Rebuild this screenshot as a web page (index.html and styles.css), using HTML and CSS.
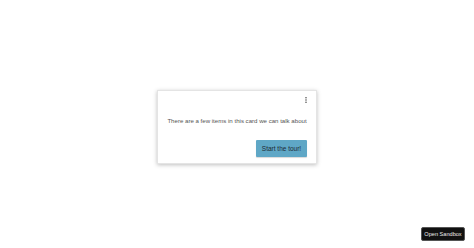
FILE: index.html
```html
<!DOCTYPE html>
<html>
<head>
<meta charset="utf-8">
<link rel="stylesheet" href="styles.css">
</head>
<body>
<div class="stage">
  <div class="card">
    <div class="card-top">
      <span class="menu" aria-label="menu">
        <svg width="2" height="6" viewBox="0 0 2 6"><circle cx="1" cy="0.8" r="0.7" fill="#333"/><circle cx="1" cy="3" r="0.7" fill="#333"/><circle cx="1" cy="5.2" r="0.7" fill="#333"/></svg>
      </span>
    </div>
    <p class="card-text">There are a few items in this card we can talk about</p>
    <div class="card-actions">
      <button class="tour-btn">Start the tour!</button>
    </div>
  </div>
</div>
<button class="sandbox-btn">Open Sandbox</button>
</body>
</html>
```
FILE: styles.css
```css
html, body {
  margin: 0;
  padding: 0;
  width: 474px;
  height: 248px;
  background: #fff;
  font-family: "Liberation Sans", Arial, sans-serif;
  overflow: hidden;
}
.stage {
  display: flex;
  justify-content: center;
  padding-top: 90px;
}
.card {
  width: 160px;
  height: 74px;
  box-sizing: border-box;
  background: #fff;
  border: 1px solid #e4e4e4;
  box-shadow: 0 1px 4px rgba(0,0,0,0.25);
  padding: 5px 9px 0 9px;
  display: flex;
  flex-direction: column;
}
.card-top {
  display: flex;
  justify-content: flex-end;
  height: 7px;
}
.menu {
  display: flex;
  align-items: center;
  padding-right: 0;
}
.menu svg { display: block; }
.card-text {
  margin: 14px 0 0 0;
  font-size: 6.1px;
  color: #555;
  text-align: center;
  white-space: nowrap;
  line-height: 8px;
}
.card-actions {
  display: flex;
  justify-content: flex-end;
  margin-top: 15px;
}
.tour-btn {
  width: 51px;
  height: 17px;
  border: none;
  border-radius: 1px;
  background: #5fa7c6;
  color: #1d2a33;
  font-family: "Liberation Sans", Arial, sans-serif;
  font-size: 6.5px;
  padding: 0;
  box-shadow: 0 1px 1px rgba(0,0,0,0.15);
}
.sandbox-btn {
  position: absolute;
  left: 421px;
  top: 227px;
  width: 44px;
  height: 14px;
  padding: 0;
  border: 1px solid #555;
  border-radius: 2px;
  background: #111;
  color: #eee;
  font-family: "Liberation Sans", Arial, sans-serif;
  font-size: 5.6px;
}
```
